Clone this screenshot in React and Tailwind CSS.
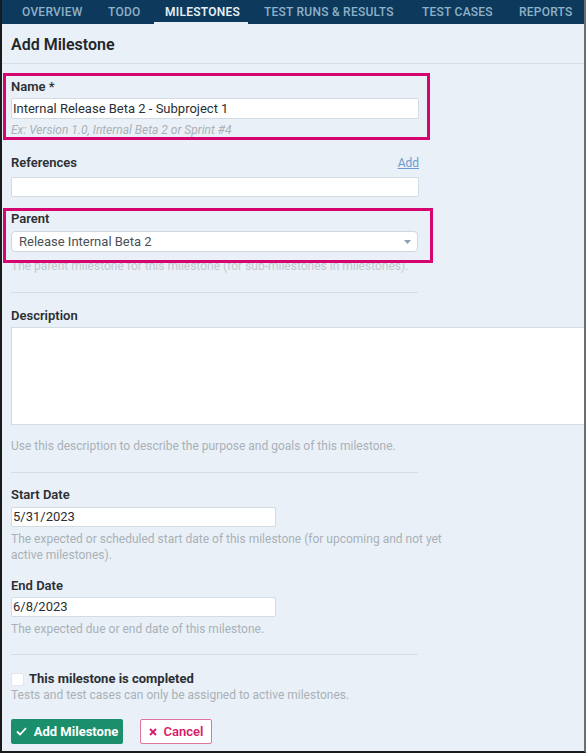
import React from "react";

const tabs = [
  { t: "OVERVIEW", w: "w-[86px]" },
  { t: "TODO", w: "w-[57px]" },
  { t: "MILESTONES", w: "w-[99px]" },
  { t: "TEST RUNS & RESULTS", w: "w-[158px]" },
  { t: "TEST CASES", w: "w-[97px]" },
  { t: "REPORTS", w: "w-[70px]" },
];

function Label({ children, className = "" }) {
  return <div className={"text-[13px] leading-[16px] font-semibold text-[#2b2f33] " + className}>{children}</div>;
}
function Hint({ children, className = "" }) {
  return <div className={"text-[12px] leading-[16px] text-[#a9b0b8] " + className}>{children}</div>;
}
function Sep({ className = "" }) {
  return <div className={"h-px w-[407px] bg-[#d3dde7] " + className} />;
}

export default function App() {
  return (
    <div
      className="w-[586px] h-[753px] overflow-hidden bg-[#e9f0f7] border-l-2 border-r-2 border-b-2 border-l-[#1a1a1a] border-r-[#6b6f73] border-b-[#1a1a1a] relative"
      style={{ fontFamily: "Roboto, 'Open Sans', sans-serif" }}
    >
      <div className="h-[24px] bg-[#0d3a5c] flex items-stretch pl-[9px]">
        {tabs.map(({ t, w }) => (
          <div key={t} className={"relative flex items-center pl-[11px] shrink-0 " + w}>
            <span
              className={
                "text-[12px] tracking-[0.02em] whitespace-nowrap " +
                (t === "MILESTONES" ? "text-[#e4eef5] font-semibold" : "text-[#8fb1c8] font-medium")
              }
            >
              {t}
            </span>
            {t === "MILESTONES" && <div className="absolute left-0 w-[94px] bottom-0 h-[2px] bg-[#e9f0f7]" />}
          </div>
        ))}
      </div>
      <div className="h-[40px] flex items-center pt-[3px] px-[9px] border-b border-[#d6dfe8]">
        <span className="text-[16px] font-semibold text-[#23272b]">Add Milestone</span>
      </div>

      <div className="px-[9px] flex flex-col">
        <div className="relative mt-[15px]">
          <Label>Name *</Label>
          <div className="mt-[3px] h-[21px] w-[408px] bg-white border border-[#d3dbe3] rounded-[2px] flex items-center px-[1px] text-[13px] text-[#2b2f33]">
            Internal Release Beta 2 - Subproject 1
          </div>
          <Hint className="mt-[3px] italic">Ex: Version 1.0, Internal Beta 2 or Sprint #4</Hint>
          <div className="absolute left-[-8px] top-[-6px] w-[427px] h-[67px] border-[3px] border-[#d6046f] pointer-events-none" />
        </div>

        <div className="mt-[17px] w-[408px] flex justify-between items-center">
          <Label>References</Label>
          <span className="text-[12px] leading-[16px] text-[#6b9bd1] underline">Add</span>
        </div>
        <div className="mt-[6px] h-[20px] w-[408px] bg-white border border-[#d3dbe3] rounded-[2px]" />

        <div className="relative mt-[14px]">
          <Label>Parent</Label>
          <div className="mt-[4px] h-[21px] w-[407px] bg-white border border-[#cfd7df] rounded-[4px] flex items-center justify-between pl-[7px] pr-[5px] text-[13px] text-[#4a4f55]">
            <span>Release Internal Beta 2</span>
            <svg width="9" height="6" viewBox="0 0 9 6">
              <path d="M1 1 L8 1 L4.5 5 Z" fill="#8a9fb5" />
            </svg>
          </div>
          <div className="absolute left-[-8px] top-[-3px] w-[430px] h-[55px] border-[3px] border-[#d6046f] pointer-events-none z-10" />
        </div>
        <Hint className="mt-[6px] text-[#c2c8ce]">The parent milestone for this milestone (for sub-milestones in milestones).</Hint>

        <Sep className="mt-[18px]" />

        <Label className="mt-[15px]">Description</Label>
        <div className="mt-[3px] h-[98px] w-[600px] bg-white border border-[#d3dbe3]" />
        <Hint className="mt-[13px]">Use this description to describe the purpose and goals of this milestone.</Hint>

        <Sep className="mt-[18px]" />

        <Label className="mt-[14px]">Start Date</Label>
        <div className="mt-[4px] h-[20px] w-[265px] bg-white border border-[#d3dbe3] rounded-[2px] flex items-center px-[1px] text-[13px] text-[#2b2f33]">
          5/31/2023
        </div>
        <Hint className="mt-[4px] w-[435px]">
          The expected or scheduled start date of this milestone (for upcoming and not yet active milestones).
        </Hint>

        <Label className="mt-[15px]">End Date</Label>
        <div className="mt-[3px] h-[20px] w-[265px] bg-white border border-[#d3dbe3] rounded-[2px] flex items-center px-[1px] text-[13px] text-[#2b2f33]">
          6/8/2023
        </div>
        <Hint className="mt-[4px]">The expected due or end date of this milestone.</Hint>

        <Sep className="mt-[17px]" />

        <div className="mt-[16px] flex items-center gap-[5px]">
          <div className="w-[13px] h-[13px] bg-white border border-[#e2e6ea] rounded-[2px]" />
          <span className="text-[13px] leading-[16px] font-bold text-[#2b2f33]">This milestone is completed</span>
        </div>
        <Hint>Tests and test cases can only be assigned to active milestones.</Hint>

        <div className="mt-[16px] flex items-center gap-[17px]">
          <div className="h-[25px] w-[112px] bg-[#1b8f6c] rounded-[2px] flex items-center justify-center gap-[7px] text-white text-[13px] font-bold">
            <svg width="11" height="9" viewBox="0 0 11 9">
              <path d="M1 4.5 L4 7.5 L10 1.2" stroke="white" strokeWidth="1.8" fill="none" />
            </svg>
            Add Milestone
          </div>
          <div className="h-[25px] w-[72px] bg-white border border-[#e3739f] rounded-[2px] flex items-center justify-center gap-[7px] text-[#d81b6a] text-[13px] font-semibold">
            <svg width="8" height="8" viewBox="0 0 8 8">
              <path d="M1 1 L7 7 M7 1 L1 7" stroke="#d81b6a" strokeWidth="1.8" />
            </svg>
            Cancel
          </div>
        </div>
      </div>
    </div>
  );
}
